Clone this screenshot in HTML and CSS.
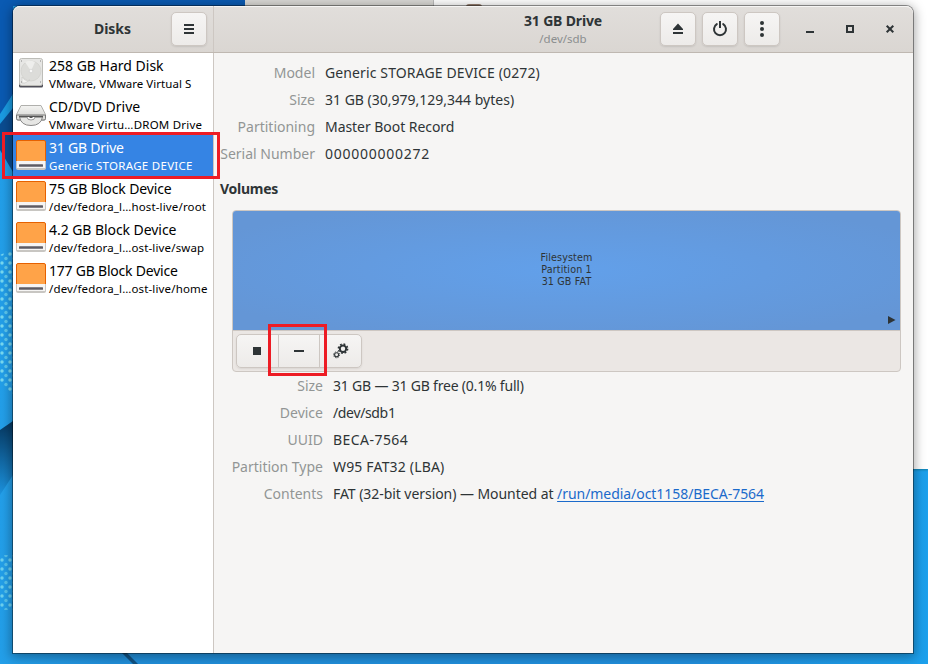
FILE: index.html
```html
<!DOCTYPE html>
<html lang="en">
<head>
<meta charset="utf-8">
<title>Disks</title>
<link rel="stylesheet" href="styles.css">
</head>
<body>
<svg class="defs" width="0" height="0" aria-hidden="true">
  <defs>
    <linearGradient id="metal" x1="0" y1="0" x2="0" y2="1"><stop offset="0" stop-color="#f4f4f2"/><stop offset="1" stop-color="#d2d2cf"/></linearGradient>
    <symbol id="block" viewBox="0 0 30 31">
      <rect x=".5" y=".5" width="29" height="28" rx="1.5" fill="#ffa348" stroke="#e66100"/>
      <path d="M0 21h30v7q0 2-2 2h-26q-2 0-2-2z" fill="#c8c6c2"/>
      <path d="M1 21h28v7h-28z" fill="#f6f5f4"/>
      <rect x="3" y="24.300" width="24" height="2.500" rx=".5" fill="#5e5c64"/>
    </symbol>
  </defs>
</svg>
<div class="desktop">
  <div class="back-window"><i class="tab"></i><i class="chip"></i></div>
  <svg class="wallpaper" width="928" height="664" viewBox="0 0 928 664">
    <defs>
      <pattern id="dots" width="8" height="9" patternUnits="userSpaceOnUse"><circle cx="2" cy="2" r="1.700" fill="#8ce6f2"/><circle cx="6" cy="6.500" r="1.700" fill="#6cd2f0"/></pattern>
      <linearGradient id="fade" x1="0" y1="0" x2="0" y2="1"><stop offset="0" stop-color="#06365e"/><stop offset="1" stop-color="#1c93df"/></linearGradient>
    </defs>
    <path d="M0 0h245v6H13v88L0 118z" fill="#0a5ab2"/>
    <path d="M13 94v20L0 132v-18z" fill="#1a9be2"/>
    <path d="M0 124l13-16v64L0 150z" fill="#0a4c91"/>
    <path d="M0 255l13-6v145l-13-10z" fill="url(#dots)" opacity=".8"/>
    <path d="M0 430l13-9v54L0 495z" fill="url(#fade)"/>
    <path d="M0 555h13v55H0z" fill="url(#dots)" opacity=".7"/>
    <path d="M122 653h5l11 11h-5z" fill="#115384"/>
  </svg>
  <div class="window">
    <header class="bar">
      <div class="bar-side"><h1>Disks</h1><button class="btn"><svg width="16" height="16"><path d="M3 3h10v2H3zM3 7h10v2H3zM3 11h10v2H3z"/></svg></button></div>
      <div class="bar-main">
        <div class="heading"><b>31 GB Drive</b><span>/dev/sdb</span></div>
        <button class="btn"><svg width="16" height="16"><path d="M8 2.500L13 8v1H3V8zM3 11h10v2H3z"/></svg></button>
        <button class="btn"><svg width="16" height="16"><path d="M4.800 3.100a6 6 0 1 0 6.400 0" fill="none" stroke="#2e3436" stroke-width="2" stroke-linecap="round"/><path d="M7 0h2v7H7z"/></svg></button>
        <button class="btn"><svg width="16" height="16"><circle cx="8" cy="2" r="2"/><circle cx="8" cy="8" r="2"/><circle cx="8" cy="14" r="2"/></svg></button>
        <div class="controls">
          <svg width="16" height="16"><path d="M4 10h8v2H4z"/></svg>
          <svg width="16" height="16"><path d="M5 5h6v6H5z" fill="none" stroke="#2e3436" stroke-width="2"/></svg>
          <svg width="16" height="16"><path d="M4.700 4.700l6.600 6.600M11.300 4.700l-6.600 6.600" fill="none" stroke="#2e3436" stroke-width="2"/></svg>
        </div>
      </div>
    </header>
    <div class="body">
      <ul class="drives">
        <li>
          <svg width="30" height="31"><path d="M3 25h24v3q0 1.500-1.500 1.500h-21q-1.500 0-1.500-1.500z" fill="#4f4e58"/><rect x="3.500" y=".5" width="23" height="27" rx="2" fill="#e6e6e4" stroke="#bdbdb8"/><circle cx="15" cy="13" r="10" fill="#dcdcd9" stroke="#d0d0cc" stroke-width=".7"/><path d="M15 13L9 4a11 11 0 0 1 10 0z" fill="#eeeeec"/><circle cx="15" cy="13" r="1.800" fill="#f8f8f7" stroke="#ccc" stroke-width=".6"/><path d="M6 19q3 5 8 3l-5 3H6z" fill="#f4f4f2" stroke="#c8c8c4" stroke-width=".6"/><path d="M5 3h1M24 3h1M5 24h1M24 24h1" stroke="#888"/></svg>
          <div class="names"><span class="n1">258 GB Hard Disk</span><small class="s1">VMware, VMware Virtual S</small></div>
        </li>
        <li>
          <svg width="30" height="31"><path d="M5 6.500h20l4.500 9v4q0 1.500-1.500 1.500h-26q-1.500 0-1.500-1.500v-4z" fill="url(#metal)" stroke="#b0b0ad"/><path d="M.5 16h29v3.500q0 1.500-1.500 1.500h-26q-1.500 0-1.500-1.500z" fill="#dededb" stroke="#777"/><path d="M3.500 18h23q-1.500 8.500-11.500 8.500T3.500 18z" fill="#e6e6e4" stroke="#888"/><path d="M3 17.500h24" stroke="#555" stroke-width="1.400"/><path d="M11 18q0 3 4 3t4-3" fill="#fafafa" stroke="#999"/><path d="M13.500 18h3v1h-3z" fill="#555"/></svg>
          <div class="names"><span class="n2">CD/DVD Drive</span><small class="s2">VMware Virtu…DROM Drive</small></div>
        </li>
        <li class="selected"><svg width="30" height="31"><use href="#block"/></svg><div class="names"><span class="n3">31 GB Drive</span><small class="s3">Generic STORAGE DEVICE</small></div></li>
        <li><svg width="30" height="31"><use href="#block"/></svg><div class="names"><span class="n4">75 GB Block Device</span><small class="s4">/dev/fedora_l…host-live/root</small></div></li>
        <li><svg width="30" height="31"><use href="#block"/></svg><div class="names"><span class="n5">4.2 GB Block Device</span><small class="s5">/dev/fedora_l…ost-live/swap</small></div></li>
        <li><svg width="30" height="31"><use href="#block"/></svg><div class="names"><span class="n6">177 GB Block Device</span><small class="s6">/dev/fedora_l…ost-live/home</small></div></li>
      </ul>
      <main>
        <dl class="facts drive-facts">
          <dt>Model</dt><dd class="model">Generic STORAGE DEVICE (0272)</dd>
          <dt>Size</dt><dd>31 GB (30,979,129,344 bytes)</dd>
          <dt>Partitioning</dt><dd class="scheme">Master Boot Record</dd>
          <dt>Serial Number</dt><dd class="serial">000000000272</dd>
        </dl>
        <h2>Volumes</h2>
        <section class="volumes">
          <div class="partition"><p>Filesystem<br>Partition 1<br>31 GB FAT</p><svg class="play" width="8" height="8"><path d="M0 0l7.500 4L0 8z"/></svg></div>
          <div class="tools">
            <div class="group">
              <button><svg width="16" height="16"><path d="M4 4h8v8H4z"/></svg></button>
              <button><svg width="16" height="16"><path d="M3 7h10v2H3z"/></svg></button>
              <button><svg width="16" height="16"><g fill="none" stroke="#2e3436"><circle cx="10" cy="5.700" r="3.200" stroke-width="2"/><circle cx="10" cy="5.700" r="4.700" stroke-width="1.400" stroke-dasharray="1.850 1.841"/><circle cx="3.600" cy="11.800" r="2" stroke-width="1.100"/><circle cx="3.600" cy="11.800" r="3" stroke-width="1" stroke-dasharray="1.178 1.178"/></g></svg></button>
            </div>
          </div>
        </section>
        <dl class="facts volume-facts">
          <dt>Size</dt><dd class="usage">31 GB — 31 GB free (0.1% full)</dd>
          <dt>Device</dt><dd class="device">/dev/sdb1</dd>
          <dt>UUID</dt><dd class="uuid">BECA-7564</dd>
          <dt>Partition Type</dt><dd class="type">W95 FAT32 (LBA)</dd>
          <dt>Contents</dt><dd class="contents">FAT (32-bit version) — Mounted at <a>/run/media/oct1158/BECA-7564</a></dd>
        </dl>
      </main>
    </div>
  </div>
  <div class="mark mark-drive"></div>
  <div class="mark mark-remove"></div>
</div>
</body>
</html>
```
FILE: styles.css
```css
* { box-sizing: border-box; }
body { margin: 0; font: 14px "Noto Sans", sans-serif; color: #2e3436; }
svg { display: block; flex: none; fill: #2e3436; }
.defs { position: absolute; }
h1, h2, p, dl, dd, ul { margin: 0; padding: 0; }
.desktop { position: relative; width: 928px; height: 664px; overflow: hidden; background: linear-gradient(90deg, #239fe9 0, #218fda 110px, #218fdd 700px, #1ca0ec 928px); }
.wallpaper { position: absolute; top: 0; left: 0; }
.back-window { position: absolute; left: 245px; top: 0; right: 0; height: 469px; background: #fff; box-shadow: 0 1px 2px #0557; }
.tab { position: absolute; left: 0; top: 0; width: 189px; height: 8px; background: #dad9d6; border-right: 1px solid #bbb; }
.chip { position: absolute; left: 221px; top: 4px; width: 16px; height: 3px; border-radius: 3px 3px 0 0; background: #967f70; }
.window { position: relative; margin: 6px 0 0 13px; width: 900px; height: 647px; border-radius: 7px 7px 0 0; background: #f6f5f4; box-shadow: 0 0 0 1px rgba(0,0,0,.4), 0 2px 11px 2px rgba(0,0,0,.34); }
.bar { display: flex; height: 47px; border-radius: 7px 7px 0 0; background: linear-gradient(#e1dedb, #dad6d2); border-bottom: 1px solid #bfb8b1; box-shadow: inset 0 1px #f6f5f4; }
.bar-side { display: flex; align-items: center; width: 201px; padding: 0 6px 0 0; border-right: 1px solid #cdc7c2; }
h1 { flex: 1; padding-left: 41px; text-align: center; font-size: 14px; line-height: 20px; }
.btn { display: flex; align-items: center; justify-content: center; width: 36px; height: 34px; padding: 0; border: 1px solid #cdc7c2; border-radius: 5px; background: linear-gradient(#f6f5f4, #edebe9); box-shadow: 0 1px 2px rgba(0,0,0,.1); }
.bar-main { flex: 1; display: flex; align-items: center; gap: 6px; }
.heading { width: 440px; padding-left: 258px; text-align: center; white-space: nowrap; }
.heading b, .heading span { display: block; }
.heading b { line-height: 18px; letter-spacing: -.15px; padding-bottom: 1px; }
.heading span { font-size: 11.500px; line-height: 16px; color: #8b8e8f; }
.controls { display: flex; gap: 24px; padding-left: 16px; }
.body { display: flex; height: 600px; }
.drives { width: 201px; background: #fff; border-right: 1px solid #cdc7c2; list-style: none; color: #000; }
.drives li { display: flex; gap: 3px; height: 41px; padding: 5px 0 0 3px; }
.drives .selected { background: #3584e4; color: #fff; }
.names { white-space: nowrap; margin-top: -2px; }
.names span, .names small { display: block; }
.names span { line-height: 19px; }
.names small { font-size: 11.500px; line-height: 17px; }
.n3, .n6 { letter-spacing: -.22px; }
.n4 { letter-spacing: -.12px; }
.n5 { letter-spacing: -.06px; }
.names .s1 { letter-spacing: .04px; }
.names .s2 { letter-spacing: .22px; }
.names .s3 { letter-spacing: .29px; }
.names .s4, .names .s5, .names .s6 { letter-spacing: .15px; }
main { flex: 1; padding: 6px 12px 0 6px; }
.facts { display: grid; line-height: 27px; white-space: nowrap; column-gap: 10px; }
.facts dt { color: #929595; text-align: right; }
.drive-facts { grid-template-columns: 95px 1fr; }
.volume-facts { grid-template-columns: 103px 1fr; }
.model { letter-spacing: .12px; }
.scheme { letter-spacing: -.05px; }
.serial { letter-spacing: .75px; }
.usage { letter-spacing: -.2px; }
.device { letter-spacing: -.35px; }
.uuid { letter-spacing: .45px; }
.type { letter-spacing: .17px; }
.contents { letter-spacing: -.055px; }
a { color: #1b6acb; text-decoration: underline; text-underline-offset: 2px; text-decoration-thickness: 1px; }
h2 { font-size: 14px; line-height: 20px; margin: 12px 0 11px; letter-spacing: -.25px; }
.volumes { margin-left: 12px; height: 162px; border: 1px solid #cdc7c2; border-radius: 4px; background: #ebe7e4; overflow: hidden; }
.partition { position: relative; display: flex; align-items: center; justify-content: center; height: 119px; padding-bottom: 1px; background: radial-gradient(ellipse at center, #62a0ea, #6496d6 85%); font: 9.600px/12px "DejaVu Sans", sans-serif; letter-spacing: .12px; text-align: center; }
.play { position: absolute; right: 4px; bottom: 6px; }
.tools { height: 41px; padding: 3px; border-top: 1px solid #cdc7c2; }
.group { display: inline-flex; width: 126px; height: 34px; border: 1px solid #cdc7c2; border-radius: 5px; background: linear-gradient(#f6f5f4, #edebe9); box-shadow: 0 1px 2px rgba(0,0,0,.08); }
.group button { flex: 1; display: flex; align-items: center; justify-content: center; border: 0; padding: 0; background: none; }
.group button + button { border-left: 1px solid #cdc7c2; }
.mark { position: absolute; border: 3px solid #ed1c24; }
.mark-drive { left: 2px; top: 132px; width: 218px; height: 47px; }
.mark-remove { left: 268px; top: 324px; width: 59px; height: 52px; }
```
